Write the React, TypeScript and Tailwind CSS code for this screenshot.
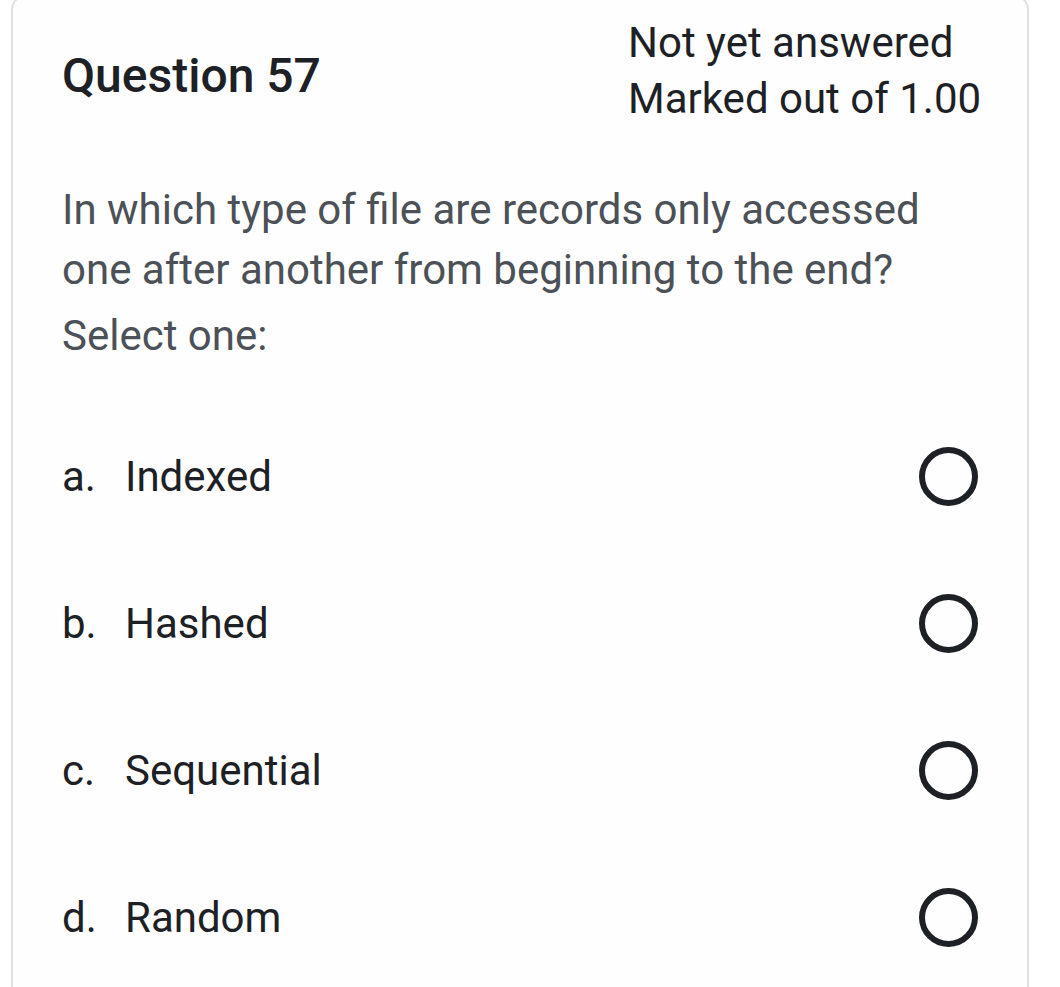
import { useState } from "react";

const options = [
  { letter: "a.", label: "Indexed" },
  { letter: "b.", label: "Hashed" },
  { letter: "c.", label: "Sequential" },
  { letter: "d.", label: "Random" },
];

export default function App() {
  const [selected, setSelected] = useState<number | null>(null);

  return (
    <div className="h-screen overflow-hidden bg-white font-['Roboto',_'Liberation_Sans',_sans-serif]">
      <div className="-mt-[6px] ml-[11px] w-[1018px] rounded-[16px] border-2 border-[#e0e0e0] bg-[#fefefe] px-[49px] pt-[19px] pb-10">
        <div className="flex items-center justify-between">
          <h2 className="mt-[10px] text-[48px] font-medium leading-[56px] text-[#1d2125]">
            Question 57
          </h2>
          <div className="w-[350px] shrink-0 whitespace-nowrap text-[42px] leading-[56px] text-[#1d2125]">
            <div>Not yet answered</div>
            <div>Marked out of 1.00</div>
          </div>
        </div>

        <div className="mt-[53px] text-[42px] text-[#4b5157]">
          <p className="leading-[60px]">
            In which type of file are records only accessed one after another
            from beginning to the end?
          </p>
          <p className="mt-[6px] leading-[60px]">Select one:</p>
        </div>

        <div className="mt-[37px] flex flex-col">
          {options.map((opt, i) => (
            <button
              key={opt.letter}
              onClick={() => setSelected(i)}
              className="flex h-[147px] items-center justify-between text-left text-[42px] leading-[60px] text-[#1d2125]"
            >
              <span className="flex items-center">
                <span className="w-[63px]">{opt.letter}</span>
                <span>{opt.label}</span>
              </span>
              <span className="flex size-[59px] items-center justify-center rounded-full border-[6px] border-[#1d2125]">
                {selected === i && (
                  <span className="size-[27px] rounded-full bg-[#1d2125]" />
                )}
              </span>
            </button>
          ))}
        </div>
      </div>
    </div>
  );
}
